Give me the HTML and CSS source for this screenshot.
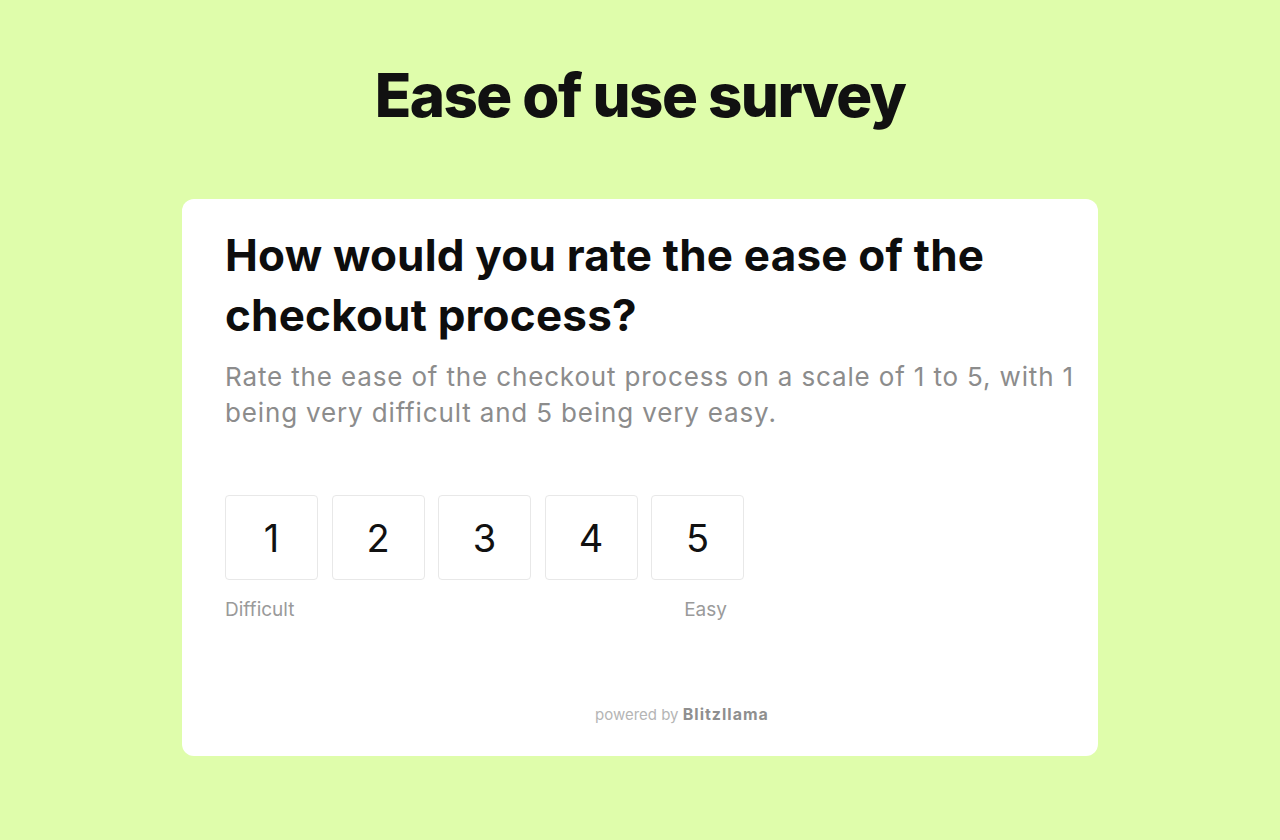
FILE: index.html
```html
<!DOCTYPE html>
<html>
<head>
<meta charset="utf-8">
<link rel="stylesheet" href="styles.css">
</head>
<body>
<main class="page">
  <h1 class="title">Ease of use survey</h1>
  <section class="card">
    <h2 class="question">How would you rate the ease of the checkout process?</h2>
    <p class="desc">Rate the ease of the checkout process on a scale of 1 to 5, with 1 being very difficult and 5 being very easy.</p>
    <div class="scale">
      <div class="opt">1</div>
      <div class="opt">2</div>
      <div class="opt">3</div>
      <div class="opt">4</div>
      <div class="opt">5</div>
    </div>
    <div class="labels">
      <span>Difficult</span>
      <span>Easy</span>
    </div>
    <div class="powered">powered by <b>Blitzllama</b></div>
  </section>
</main>
</body>
</html>
```
FILE: styles.css
```css
html, body {
  margin: 0;
  padding: 0;
}
body {
  background: #dffdab;
  width: 1280px;
  height: 840px;
  overflow: hidden;
  font-family: Inter, "Liberation Sans", sans-serif;
}
.page {
  display: flex;
  flex-direction: column;
  align-items: center;
  padding-top: 57px;
}
.title {
  margin: 0;
  font-size: 60px;
  line-height: 76px;
  font-weight: 800;
  color: #111;
  letter-spacing: -1.55px;
}
.card {
  margin-top: 66px;
  width: 916px;
  height: 557px;
  box-sizing: border-box;
  background: #fff;
  border-radius: 12px;
  padding: 26px 16px 0 43px;
  display: flex;
  flex-direction: column;
}
.question {
  margin: 0;
  font-size: 44px;
  line-height: 60px;
  font-weight: 700;
  color: #0d0d0d;
  letter-spacing: 0.2px;
}
.desc {
  margin: 14px 0 0 0;
  font-size: 26px;
  line-height: 36px;
  font-weight: 400;
  color: #8c8c8c;
  letter-spacing: 0.85px;
}
.scale {
  margin-top: 64px;
  display: flex;
  gap: 13.5px;
}
.opt {
  width: 93px;
  height: 85px;
  box-sizing: border-box;
  border: 1px solid #e8e8e8;
  border-radius: 4px;
  display: flex;
  align-items: center;
  justify-content: center;
  font-size: 38px;
  color: #111;
}
.labels {
  margin-top: 18px;
  width: 502px;
  display: flex;
  justify-content: space-between;
  font-size: 19px;
  line-height: 24px;
  color: #9a9a9a;
}
.powered {
  margin-top: auto;
  margin-bottom: 32px;
  margin-left: 370px;
  font-size: 15px;
  color: #b5b5b5;
}
.powered b {
  color: #8f8f8f;
  font-weight: 700;
  font-size: 16px;
  letter-spacing: 1px;
}
```
